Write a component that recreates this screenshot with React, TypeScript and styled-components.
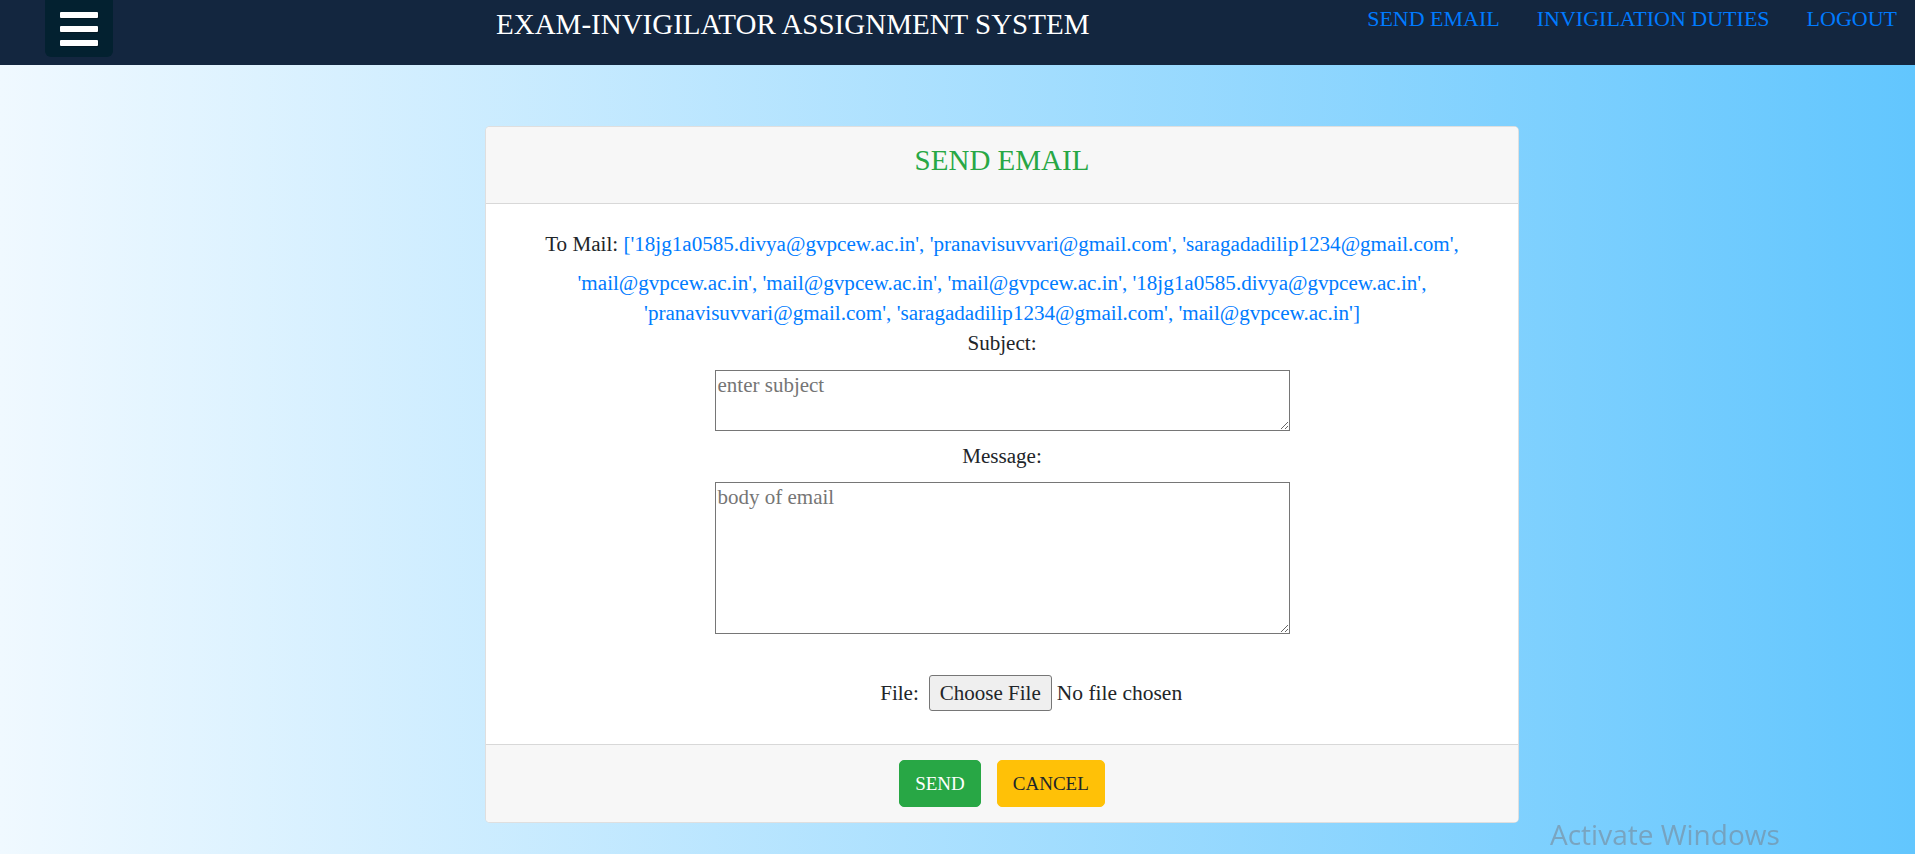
import React from "react";
import styled, { createGlobalStyle } from "styled-components";

const GlobalStyle = createGlobalStyle`
  html, body {
    margin: 0;
    padding: 0;
  }
  body {
    font-family: "Liberation Serif", "Times New Roman", serif;
    color: #212529;
    background: linear-gradient(to right, #f0f9ff 0%, #62c6fe 100%);
    min-height: 100vh;
    overflow: hidden;
  }
  * { box-sizing: border-box; }
`;

const Page = styled.div`
  min-height: 100vh;
  display: flex;
  flex-direction: column;
`;

const NavBar = styled.nav`
  height: 65px;
  background: #13263f;
  display: flex;
  align-items: flex-start;
  padding: 0 18px 0 45px;
`;

const MenuButton = styled.button`
  width: 68px;
  height: 57px;
  background: #032130;
  border: none;
  border-radius: 0 0 6px 6px;
  display: flex;
  flex-direction: column;
  align-items: center;
  justify-content: center;
  gap: 8px;
  padding: 0;
  cursor: pointer;
`;

const MenuBar = styled.span`
  display: block;
  width: 38px;
  height: 6px;
  background: #ffffff;
  border-radius: 1px;
  box-shadow: 1px 1px 0 rgba(0, 0, 0, 0.25);
`;

const Brand = styled.h1`
  margin: 6px 0 0 383px;
  font-size: 29px;
  line-height: 36px;
  font-weight: 400;
  color: #ffffff;
  white-space: nowrap;
`;

const NavLinks = styled.div`
  margin-left: auto;
  display: flex;
  gap: 37px;
  padding-top: 5px;
`;

const NavLink = styled.a`
  font-size: 22px;
  line-height: 28px;
  color: #007bff;
  text-decoration: none;
  white-space: nowrap;
  cursor: pointer;
`;

const Card = styled.section`
  margin: 61px 0 0 485px;
  width: 1034px;
  background: #ffffff;
  border: 1px solid rgba(0, 0, 0, 0.125);
  border-radius: 5px;
  overflow: hidden;
`;

const CardHeader = styled.header`
  background: #f7f7f7;
  border-bottom: 1px solid rgba(0, 0, 0, 0.125);
  padding: 15px 25px;
  text-align: center;
`;

const CardTitle = styled.h3`
  margin: 0 0 10px;
  font-size: 29px;
  line-height: 36px;
  font-weight: 400;
  color: #28a745;
`;

const CardBody = styled.div`
  padding: 25px;
  text-align: center;
  font-size: 21.1px;
`;

const RecipientLine = styled.div<{ $gap?: number }>`
  line-height: 30px;
  margin-bottom: ${(p) => p.$gap ?? 0}px;
  white-space: nowrap;
`;

const Emails = styled.span`
  color: #007bff;
`;

const FieldLabel = styled.label<{ $top?: number; $bottom: number }>`
  display: block;
  line-height: 30px;
  margin-top: ${(p) => p.$top ?? 0}px;
  margin-bottom: ${(p) => p.$bottom}px;
`;

const TextArea = styled.textarea<{ $height: number }>`
  display: block;
  margin: 0 auto;
  width: 575px;
  height: ${(p) => p.$height}px;
  border: 1px solid #767676;
  border-radius: 0;
  padding: 2px 2px;
  font-family: "Liberation Serif", "Times New Roman", serif;
  font-size: 21px;
  line-height: 24px;
  color: #212529;
  background: #ffffff;
  &::placeholder {
    color: #757575;
  }
`;

const FileRow = styled.div`
  margin: 41px 0 8px;
  padding-left: 171px;
  display: flex;
  justify-content: center;
  align-items: center;
  gap: 10px;
  height: 36px;
`;

const FileInput = styled.input`
  font-family: "Liberation Serif", "Times New Roman", serif;
  font-size: 21.5px;
  color: #212529;
  &::file-selector-button {
    font-family: "Liberation Serif", "Times New Roman", serif;
    font-size: 21px;
    line-height: 24px;
    height: 36px;
    padding: 0 10px;
    margin-right: 5px;
    background: #efefef;
    border: 1px solid #767676;
    border-radius: 3px;
    color: #212529;
  }
`;

const CardFooter = styled.footer`
  background: #f7f7f7;
  border-top: 1px solid rgba(0, 0, 0, 0.125);
  padding: 15px 25px;
  display: flex;
  justify-content: center;
  gap: 16px;
`;

const ActionButton = styled.button<{ $variant: "send" | "cancel" }>`
  font-family: "Liberation Serif", "Times New Roman", serif;
  font-size: 19px;
  line-height: 30px;
  padding: 7.5px 15px;
  border-radius: 5px;
  cursor: pointer;
  border: 1px solid ${(p) => (p.$variant === "send" ? "#28a745" : "#ffc107")};
  background: ${(p) => (p.$variant === "send" ? "#28a745" : "#ffc107")};
  color: ${(p) => (p.$variant === "send" ? "#ffffff" : "#212529")};
`;

const Watermark = styled.div`
  position: fixed;
  left: 1550px;
  top: 816px;
  font-family: "Open Sans", "Noto Sans", sans-serif;
  font-size: 28px;
  line-height: 36px;
  color: rgba(120, 130, 140, 0.55);
  pointer-events: none;
  white-space: nowrap;
`;

const recipientLines = [
  "['18jg1a0585.divya@gvpcew.ac.in', 'pranavisuvvari@gmail.com', 'saragadadilip1234@gmail.com',",
  "'mail@gvpcew.ac.in', 'mail@gvpcew.ac.in', 'mail@gvpcew.ac.in', '18jg1a0585.divya@gvpcew.ac.in',",
  "'pranavisuvvari@gmail.com', 'saragadadilip1234@gmail.com', 'mail@gvpcew.ac.in']",
];

export default function App() {
  return (
    <Page>
      <GlobalStyle />
      <NavBar>
        <MenuButton aria-label="menu">
          <MenuBar />
          <MenuBar />
          <MenuBar />
        </MenuButton>
        <Brand>EXAM-INVIGILATOR ASSIGNMENT SYSTEM</Brand>
        <NavLinks>
          <NavLink>SEND EMAIL</NavLink>
          <NavLink>INVIGILATION DUTIES</NavLink>
          <NavLink>LOGOUT</NavLink>
        </NavLinks>
      </NavBar>

      <Card>
        <CardHeader>
          <CardTitle>SEND EMAIL</CardTitle>
        </CardHeader>
        <CardBody>
          <RecipientLine $gap={9}>
            To Mail: <Emails>{recipientLines[0]}</Emails>
          </RecipientLine>
          <RecipientLine>
            <Emails>{recipientLines[1]}</Emails>
          </RecipientLine>
          <RecipientLine>
            <Emails>{recipientLines[2]}</Emails>
          </RecipientLine>
          <FieldLabel $bottom={12}>Subject:</FieldLabel>
          <TextArea $height={61} placeholder="enter subject" />
          <FieldLabel $top={10} $bottom={11}>
            Message:
          </FieldLabel>
          <TextArea $height={152} placeholder="body of email" />
          <FileRow>
            <span>File:</span>
            <FileInput type="file" />
          </FileRow>
        </CardBody>
        <CardFooter>
          <ActionButton $variant="send">SEND</ActionButton>
          <ActionButton $variant="cancel">CANCEL</ActionButton>
        </CardFooter>
      </Card>
      <Watermark>Activate Windows</Watermark>
    </Page>
  );
}
